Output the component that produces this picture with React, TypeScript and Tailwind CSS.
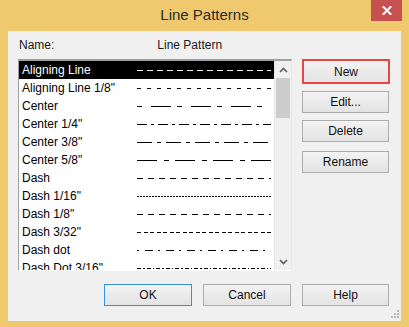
import React from "react";

const rows: { name: string; dash: string }[] = [
  { name: "Aligning Line", dash: "6 4" },
  { name: 'Aligning Line 1/8"', dash: "4 6" },
  { name: "Center", dash: "5 9 20 6" },
  { name: 'Center 1/4"', dash: "10 4 3 4" },
  { name: 'Center 3/8"', dash: "15 5 4 5" },
  { name: 'Center 5/8"', dash: "20 7 5 6" },
  { name: "Dash", dash: "6 5" },
  { name: 'Dash 1/16"', dash: "1.5 1.5" },
  { name: 'Dash 1/8"', dash: "6 5" },
  { name: 'Dash 3/32"', dash: "4 2.5" },
  { name: "Dash dot", dash: "2 6 8 5" },
  { name: 'Dash Dot 3/16"', dash: "4 2 1.5 2" },
];

function Pattern({ dash, selected }: { dash: string; selected: boolean }) {
  return (
    <svg width="134" height="18" className="shrink-0">
      <line
        x1="0"
        y1="9.5"
        x2="134"
        y2="9.5"
        stroke={selected ? "#ffffff" : "#000000"}
        strokeWidth="1"
        strokeDasharray={dash}
        shapeRendering="crispEdges"
      />
    </svg>
  );
}

function Btn({
  label,
  className = "",
}: {
  label: string;
  className?: string;
}) {
  return (
    <div
      className={
        "flex items-center justify-center bg-gradient-to-b from-[#f3f3f3] to-[#e3e3e3] text-[12px] text-[#111] " +
        className
      }
    >
      {label}
    </div>
  );
}

export default function App() {
  return (
    <div
      className="flex h-[327px] w-[409px] flex-col overflow-hidden bg-[#f0c86d]"
      style={{ fontFamily: '"Liberation Sans", Arial, sans-serif' }}
    >
      {/* title bar */}
      <div className="grid h-[31px] shrink-0 grid-cols-[1fr_auto_1fr]">
        <div />
        <div className="pt-[5px] text-[15px] leading-[20px] text-[#2b2b2b]">
          Line Patterns
        </div>
        <div className="flex justify-end pr-[7px]">
          <div className="flex h-[21px] w-[31px] items-center justify-center bg-[#c75050]">
            <svg width="10" height="9" viewBox="0 0 10 9">
              <path
                d="M1.5 1 L8.5 8 M8.5 1 L1.5 8"
                stroke="#ffffff"
                strokeWidth="2"
                strokeLinecap="square"
              />
            </svg>
          </div>
        </div>
      </div>

      {/* client */}
      <div className="relative mx-[8px] mb-[6px] flex flex-1 flex-col bg-[#f0f0f0] pl-[10px] pr-[12px]">
        <div className="flex">
          <div className="flex flex-col">
            <div className="flex h-[28px] items-end pb-[7px] text-[12px] leading-[14px] text-[#1a1a1a]">
              <span className="pl-[1px]">Name:</span>
              <span className="pl-[103px]">Line Pattern</span>
            </div>
            {/* list */}
            <div className="flex h-[212px] w-[274px] overflow-hidden border-b border-l border-r border-t-2 border-b-[#ffffff] border-l-[#a0a0a0] border-r-[#e8e8e8] border-t-[#a0a0a0] bg-white">
              <div className="flex flex-1 flex-col overflow-hidden">
                {rows.map((r, i) => {
                  const sel = i === 0;
                  return (
                    <div
                      key={r.name}
                      className={
                        "flex h-[18px] shrink-0 items-center text-[12px] " +
                        (sel ? "bg-black text-white" : "text-black")
                      }
                    >
                      <div className="w-[118px] shrink-0 pl-[3px] leading-[18px]">
                        {r.name}
                      </div>
                      <Pattern dash={r.dash} selected={sel} />
                    </div>
                  );
                })}
              </div>
              {/* scrollbar */}
              <div className="flex w-[17px] shrink-0 flex-col border-l border-[#e6e6e6] bg-[#f0f0f0]">
                <div className="flex h-[17px] items-center justify-center">
                  <svg width="9" height="6" viewBox="0 0 9 6">
                    <path d="M1 5 L4.5 1.5 L8 5" stroke="#606060" strokeWidth="1.6" fill="none" />
                  </svg>
                </div>
                <div className="mx-[1px] h-[40px] bg-[#cdcdcd]" />
                <div className="flex-1" />
                <div className="flex h-[17px] items-center justify-center">
                  <svg width="9" height="6" viewBox="0 0 9 6">
                    <path d="M1 1 L4.5 4.5 L8 1" stroke="#606060" strokeWidth="1.6" fill="none" />
                  </svg>
                </div>
              </div>
            </div>
          </div>

          {/* right buttons */}
          <div className="ml-[10px] flex flex-col pt-[28px]">
            <Btn label="New" className="h-[25px] w-[88px] border-2 border-[#e8454a]" />
            <Btn label="Edit..." className="mt-[7px] h-[22px] w-[87px] border border-[#adadad]" />
            <Btn label="Delete" className="mt-[7px] h-[22px] w-[87px] border border-[#adadad]" />
            <Btn label="Rename" className="mt-[9px] h-[22px] w-[87px] border border-[#adadad]" />
          </div>
        </div>

        {/* bottom buttons */}
        <div className="mt-[13px] flex justify-end gap-[11px]">
          <Btn label="OK" className="h-[22px] w-[88px] border border-[#3c8ee0]" />
          <Btn label="Cancel" className="h-[22px] w-[88px] border border-[#adadad]" />
          <Btn label="Help" className="h-[22px] w-[87px] border border-[#adadad]" />
        </div>

        {/* size grip */}
        <svg width="8" height="8" viewBox="0 0 8 8" className="absolute bottom-[3px] right-[2px]">
          <rect x="6" y="0" width="2" height="2" fill="#bcbcbc" />
          <rect x="3" y="3" width="2" height="2" fill="#bcbcbc" />
          <rect x="6" y="3" width="2" height="2" fill="#bcbcbc" />
          <rect x="0" y="6" width="2" height="2" fill="#bcbcbc" />
          <rect x="3" y="6" width="2" height="2" fill="#bcbcbc" />
          <rect x="6" y="6" width="2" height="2" fill="#bcbcbc" />
        </svg>
      </div>
    </div>
  );
}
